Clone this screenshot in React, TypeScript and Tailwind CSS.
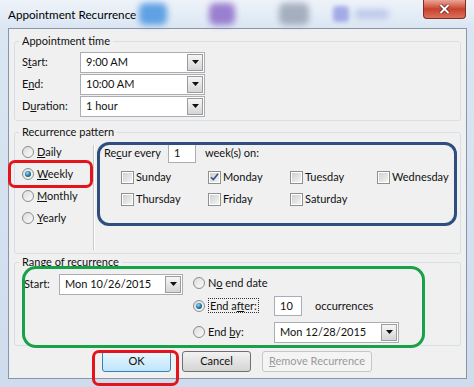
import type { ReactNode } from "react";

function Radio({ on }: { on?: boolean }) {
  return (
    <span className="flex h-[12px] w-[12px] shrink-0 items-center justify-center rounded-full border border-[#8b8c8e] bg-gradient-to-br from-[#dcdcdc] to-[#fbfbfb]">
      {on && <span className="h-[6px] w-[6px] rounded-full bg-[radial-gradient(circle_at_40%_35%,#8fe0f8,#1d6f9e_55%,#0b3653)]" />}
    </span>
  );
}

function Check({ on }: { on?: boolean }) {
  return (
    <span className="flex h-[13px] w-[13px] shrink-0 items-center justify-center border border-[#8e8f8f] bg-white p-[1px]">
      <span className="flex h-full w-full items-center justify-center bg-gradient-to-br from-[#cfd0d2] to-[#f4f4f4]">
        {on && (
          <svg width="9" height="8" viewBox="0 0 9 8">
            <path d="M1 4.2 3.4 6.6 8 0.8" fill="none" stroke="#3d4f8a" strokeWidth="1.6" />
          </svg>
        )}
      </span>
    </span>
  );
}

function Combo({ value, className }: { value: string; className: string }) {
  return (
    <div className={`flex h-[21px] items-center border border-[#abadb3] bg-white ${className}`}>
      <span className="flex-1 whitespace-nowrap pl-[5px]">{value}</span>
      <span className="m-[1px] flex h-[17px] w-[16px] items-center justify-center border border-[#9a9c9e] bg-gradient-to-b from-[#f6f6f6] to-[#d5d5d5]">
        <svg width="7" height="4" viewBox="0 0 7 4">
          <path d="M0 0h7L3.5 4z" fill="#111" />
        </svg>
      </span>
    </div>
  );
}

function Btn({ children, className }: { children: ReactNode; className: string }) {
  return (
    <div className={`flex h-[21px] items-center justify-center whitespace-nowrap rounded-[3px] border ${className}`}>{children}</div>
  );
}

export default function App() {
  return (
    <div className="relative flex h-[387px] w-[474px] flex-col overflow-hidden whitespace-nowrap bg-[#d6e2f0] font-['Lato',sans-serif] text-[11px] text-[#111]">
      {/* title bar */}
      <div className="flex h-[28px] shrink-0 items-start bg-gradient-to-b from-[#eef3f9] to-[#dbe6f3]">
        <span className="ml-[8px] mt-[5px] text-[11.7px] leading-[18px] text-black">Appointment Recurrence</span>
        <span className="ml-[3px] mt-[3px] h-[22px] w-[28px] rounded-md bg-[#3f8fe0] opacity-80 blur-[3px]" />
        <span className="ml-[42px] mt-[3px] h-[22px] w-[26px] rounded-md bg-[#7b52c0] opacity-70 blur-[3px]" />
        <span className="ml-[44px] mt-[3px] h-[22px] w-[30px] rounded-md bg-[#8a95a8] opacity-70 blur-[3px]" />
        <span className="ml-[24px] mt-[6px] h-[16px] w-[16px] rounded-sm bg-[#8790e0] opacity-70 blur-[2px]" />
        <span className="ml-[6px] mt-[9px] h-[10px] w-[34px] rounded-sm bg-[#a7b4e6] opacity-60 blur-[3px]" />
        <div className="ml-auto mr-[8px] flex h-[19px] w-[43px] items-center justify-center rounded-b-[4px] border border-t-0 border-[#7e2f25] bg-gradient-to-b from-[#e9a597] via-[#c9402c] to-[#d9705c]">
          <svg width="11" height="10" viewBox="0 0 11 10">
            <path d="M1.5 1 9.5 9M9.5 1 1.5 9" stroke="#5a1a12" strokeWidth="3.4" />
            <path d="M1.5 1 9.5 9M9.5 1 1.5 9" stroke="#fff" strokeWidth="2" />
          </svg>
        </div>
      </div>

      {/* body */}
      <div className="flex h-[351px] shrink-0">
        <div className="w-[8px] bg-gradient-to-b from-[#dbe6f3] to-[#cfdcec]" />
        <div className="flex w-[459px] flex-col border border-[#8796a8] bg-[#f0f0f0] px-[5px] pt-[4px]">
          <fieldset className="rounded-[3px] border border-[#d5dfe5] pb-[3px]">
            <legend className="ml-[4px] px-[3px] leading-[16px]">Appointment time</legend>
            <div className="flex flex-col pt-[2px]">
              <div className="flex h-[22px] items-center">
                <span className="w-[65px] pl-[7px]">
                  S<u>t</u>art:
                </span>
                <Combo value="9:00 AM" className="w-[125px]" />
              </div>
              <div className="flex h-[22px] items-center">
                <span className="w-[65px] pl-[7px]">
                  E<u>n</u>d:
                </span>
                <Combo value="10:00 AM" className="w-[125px]" />
              </div>
              <div className="flex h-[22px] items-center">
                <span className="w-[65px] pl-[7px]">
                  D<u>u</u>ration:
                </span>
                <Combo value="1 hour" className="w-[125px]" />
              </div>
            </div>
          </fieldset>

          <fieldset className="mt-[3px] rounded-[3px] border border-[#d5dfe5]">
            <legend className="ml-[4px] px-[3px] leading-[16px]">Recurrence pattern</legend>
            <div className="flex h-[113px]">
              <div className="flex w-[78px] flex-col pt-[1px]">
                {[
                  ["D", "aily", false],
                  ["W", "eekly", true],
                  ["M", "onthly", false],
                  ["Y", "early", false],
                ].map(([k, rest, on]) => (
                  <div key={k as string} className="flex h-[22px] items-center gap-[3px] pl-[7px]">
                    <Radio on={on as boolean} />
                    <span>
                      <u>{k as string}</u>
                      {rest as string}
                    </span>
                  </div>
                ))}
              </div>
              <div className="mb-[3px] mt-[5px] flex">
                <div className="w-px bg-[#c9c9c9]" />
                <div className="w-px bg-white" />
              </div>
              <div className="flex flex-col pl-[9px] pt-[3px]">
                <div className="flex h-[20px] items-center">
                  <span className="w-[64px]">
                    Re<u>c</u>ur every
                  </span>
                  <div className="flex h-[20px] w-[28px] items-center border border-[#abadb3] bg-white pl-[5px]">1</div>
                  <span className="ml-[9px]">week(s) on:</span>
                </div>
                <div className="mt-[3px] flex flex-col pl-[17px]">
                  <div className="flex h-[22px] items-center">
                    <div className="flex w-[87px] items-center gap-[2px]">
                      <Check />
                      <span>Sunday</span>
                    </div>
                    <div className="flex w-[82px] items-center gap-[2px]">
                      <Check on />
                      <span>Monday</span>
                    </div>
                    <div className="flex w-[87px] items-center gap-[2px]">
                      <Check />
                      <span>Tuesday</span>
                    </div>
                    <div className="flex items-center gap-[2px]">
                      <Check />
                      <span>Wednesday</span>
                    </div>
                  </div>
                  <div className="flex h-[22px] items-center">
                    <div className="flex w-[87px] items-center gap-[2px]">
                      <Check />
                      <span>Thursday</span>
                    </div>
                    <div className="flex w-[82px] items-center gap-[2px]">
                      <Check />
                      <span>Friday</span>
                    </div>
                    <div className="flex items-center gap-[2px]">
                      <Check />
                      <span>Saturday</span>
                    </div>
                  </div>
                </div>
              </div>
            </div>
          </fieldset>

          <fieldset className="rounded-[3px] border border-[#d5dfe5]">
            <legend className="ml-[4px] px-[3px] leading-[16px]">Range of recurrence</legend>
            <div className="flex h-[75px]">
              <div className="box-content flex h-[20px] items-center pl-[9px] pt-[4px]">
                <span className="w-[35px]">Start:</span>
                <Combo value="Mon 10/26/2015" className="w-[124px]" />
              </div>
              <div className="ml-[10px] flex flex-col pt-[2px]">
                <div className="flex h-[22px] items-center gap-[3px]">
                  <Radio />
                  <span>
                    N<u>o</u> end date
                  </span>
                </div>
                <div className="mt-[1px] flex h-[22px] items-center gap-[3px]">
                  <Radio on />
                  <span className="w-[63px]">
                    <span className="border border-dotted border-[#333] px-[1px]">
                      End a<u>f</u>ter:
                    </span>
                  </span>
                  <div className="flex h-[20px] w-[28px] items-center border border-[#abadb3] bg-white pl-[5px]">10</div>
                  <span className="ml-[10px]">occurrences</span>
                </div>
                <div className="mt-[4px] flex h-[22px] items-center gap-[3px]">
                  <Radio />
                  <span className="w-[63px]">
                    End <u>b</u>y:
                  </span>
                  <Combo value="Mon 12/28/2015" className="w-[125px]" />
                </div>
              </div>
            </div>
          </fieldset>

          <div className="mt-[5px] flex pl-[88px]">
            <Btn className="w-[69px] border-[#3c7fb1] bg-gradient-to-b from-[#eaf6fd] to-[#bee6fd]">OK</Btn>
            <Btn className="ml-[11px] w-[69px] border-[#707070] bg-gradient-to-b from-[#f2f2f2] to-[#d4d4d4]">Cancel</Btn>
            <Btn className="ml-[11px] w-[110px] border-[#c4c6c8] bg-[#f4f4f4] text-[#9a9a9a]">
              <span>
                <u>R</u>emove Recurrence
              </span>
            </Btn>
          </div>
        </div>
        <div className="flex-1 bg-gradient-to-b from-[#dbe6f3] to-[#cfdcec]" />
      </div>
      <div className="flex-1 bg-[#cfdced]" />

      {/* annotations */}
      <div className="absolute left-[8px] top-[160px] h-[28px] w-[85px] rounded-[7px] border-[3px] border-[#e3141c]" />
      <div className="absolute left-[97px] top-[142px] h-[84px] w-[360px] rounded-[12px] border-[3px] border-[#2e4f7e]" />
      <div className="absolute left-[22px] top-[266px] h-[82px] w-[403px] rounded-[14px] border-[3px] border-[#17a24a]" />
      <div className="absolute left-[92px] top-[350px] h-[36px] w-[87px] rounded-[7px] border-[3px] border-[#e3141c]" />
    </div>
  );
}
